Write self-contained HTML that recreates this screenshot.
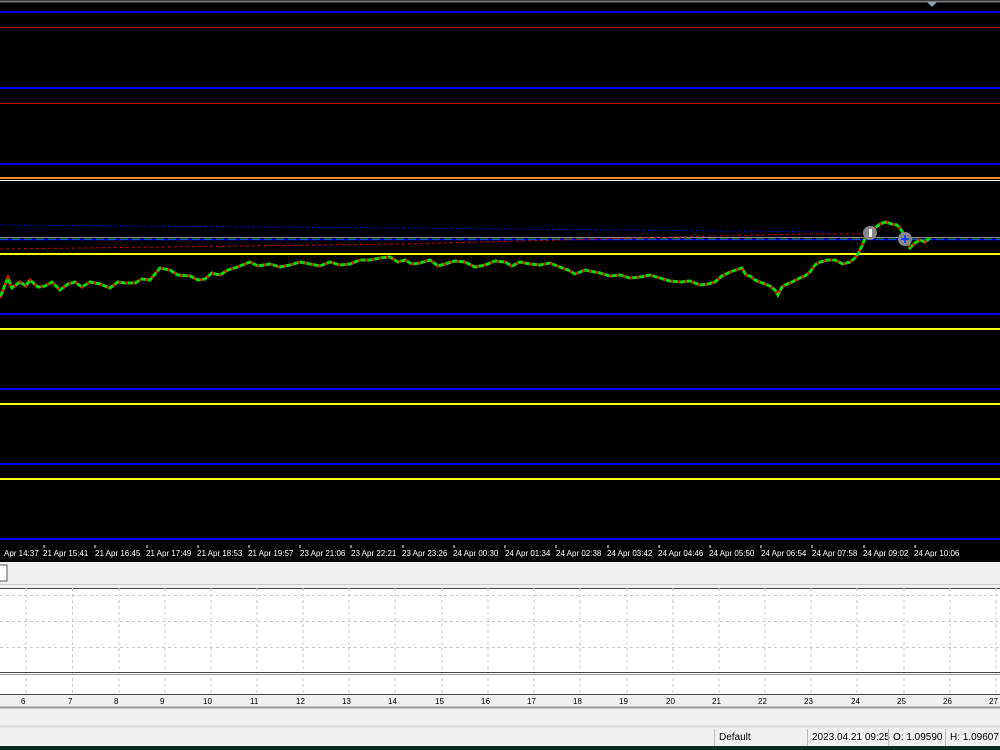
<!DOCTYPE html>
<html><head><meta charset="utf-8"><style>
html,body{margin:0;padding:0;width:1000px;height:750px;overflow:hidden;background:#f0f0f0;font-family:"Liberation Sans",sans-serif}
.t{position:absolute;font-size:8px;color:#fff;top:549px;white-space:nowrap}
.n{position:absolute;font-size:8px;color:#000;top:697px}
.s{position:absolute;top:729px;height:17px;font-size:10px;line-height:17px;color:#000;border-left:1px solid #bbb;padding-left:4px;white-space:nowrap}
</style></head><body>
<svg width="1000" height="750" style="position:absolute;left:0;top:0">
<rect x="0" y="0" width="1000" height="562" fill="#000"/>
<line x1="0" y1="1.5" x2="1000" y2="1.5" stroke="#777" stroke-width="2"/>
<polygon points="927,2 937,2 932,7" fill="#8fa5b5"/>
<g stroke="#0000ee" stroke-width="2">
<line x1="0" y1="12" x2="1000" y2="12"/><line x1="0" y1="88" x2="1000" y2="88"/><line x1="0" y1="164" x2="1000" y2="164"/>
<line x1="0" y1="314" x2="1000" y2="314"/><line x1="0" y1="389" x2="1000" y2="389"/><line x1="0" y1="464" x2="1000" y2="464"/><line x1="0" y1="539" x2="1000" y2="539"/>
</g>
<g stroke="#aa1100" stroke-width="1"><line x1="0" y1="27.5" x2="1000" y2="27.5"/><line x1="0" y1="103.5" x2="1000" y2="103.5"/></g>
<line x1="0" y1="178" x2="1000" y2="178" stroke="#ff8c1a" stroke-width="2"/>
<line x1="0" y1="180.5" x2="1000" y2="180.5" stroke="#fff" stroke-width="1"/>
<g stroke="#ffff00" stroke-width="2"><line x1="0" y1="254" x2="1000" y2="254"/><line x1="0" y1="329" x2="1000" y2="329"/><line x1="0" y1="404" x2="1000" y2="404"/><line x1="0" y1="479" x2="1000" y2="479"/></g>
<polyline points="0,225 400,228 830,232" fill="none" stroke="#0000cc" stroke-dasharray="3,3"/>
<line x1="0" y1="237.5" x2="1000" y2="237.5" stroke="#888" stroke-width="1"/>
<line x1="0" y1="239.5" x2="1000" y2="239.5" stroke="#0000ff" stroke-width="1.5"/>
<line x1="0" y1="239" x2="1000" y2="239" stroke="#2a9a6a" stroke-dasharray="8,4" stroke-width="1"/>
<polyline points="0,249 400,244 800,234 870,234" fill="none" stroke="#cc0000" stroke-dasharray="3,3"/>
<polyline fill="none" stroke="#00dd00" stroke-width="3" points="0,298 5,285 8,278 12,288 20,282 26,286 30,280 38,287 45,286 52,282 60,290 68,284 75,282 82,287 90,282 100,284 110,288 118,282 125,283 135,283 142,279 150,280 160,268 170,270 178,275 190,276 198,280 205,279 212,273 220,275 228,270 235,268 250,262 258,266 270,264 280,267 290,265 300,262 310,264 320,266 330,262 340,265 350,264 360,260 370,260 380,258 390,257 398,262 405,260 412,264 420,263 430,260 438,266 445,264 455,261 465,262 475,267 485,265 495,261 505,262 512,266 520,262 530,264 540,265 550,263 560,267 568,270 575,274 585,270 600,273 610,276 620,275 630,278 640,277 650,275 660,278 670,281 680,282 690,281 700,285 708,284 715,282 722,276 730,272 742,268 746,275 750,276 755,280 760,282 765,284 770,286 775,290 778,295 782,287 785,285 792,282 800,278 805,276 810,272 815,265 820,262 828,260 835,260 843,264 850,262 855,258 858,254 862,246 866,236 870,232 875,228 880,224 886,222 892,224 897,225 900,228 905,236 910,248 915,243 920,240 925,242 930,238"/>
<polyline fill="none" stroke="#ee0000" stroke-width="3" stroke-dasharray="2,5" points="0,298 5,285 8,278 12,288 20,282 26,286 30,280 38,287 45,286 52,282 60,290 68,284 75,282 82,287 90,282 100,284 110,288 118,282 125,283 135,283 142,279 150,280 160,268 170,270 178,275 190,276 198,280 205,279 212,273 220,275 228,270 235,268 250,262 258,266 270,264 280,267 290,265 300,262 310,264 320,266 330,262 340,265 350,264 360,260 370,260 380,258 390,257 398,262 405,260 412,264 420,263 430,260 438,266 445,264 455,261 465,262 475,267 485,265 495,261 505,262 512,266 520,262 530,264 540,265 550,263 560,267 568,270 575,274 585,270 600,273 610,276 620,275 630,278 640,277 650,275 660,278 670,281 680,282 690,281 700,285 708,284 715,282 722,276 730,272 742,268 746,275 750,276 755,280 760,282 765,284 770,286 775,290 778,295 782,287 785,285 792,282 800,278 805,276 810,272 815,265 820,262 828,260 835,260 843,264 850,262 855,258 858,254 862,246 866,236 870,232 875,228 880,224 886,222 892,224 897,225 900,228 905,236 910,248 915,243 920,240 925,242 930,238"/>
<circle cx="870" cy="233" r="7" fill="#888"/><rect x="869" y="229" width="3" height="8" fill="#fff"/>
<circle cx="905" cy="239" r="7" fill="#888"/><path d="M901 239h8M905 235v8" stroke="#1040ff" stroke-width="2"/>
<g stroke="#fff" stroke-width="1">
<line x1="44" y1="545" x2="44" y2="548"/><line x1="95" y1="545" x2="95" y2="548"/><line x1="147" y1="545" x2="147" y2="548"/><line x1="198" y1="545" x2="198" y2="548"/><line x1="249" y1="545" x2="249" y2="548"/><line x1="300" y1="545" x2="300" y2="548"/><line x1="351" y1="545" x2="351" y2="548"/><line x1="403" y1="545" x2="403" y2="548"/><line x1="454" y1="545" x2="454" y2="548"/><line x1="505" y1="545" x2="505" y2="548"/><line x1="556" y1="545" x2="556" y2="548"/><line x1="608" y1="545" x2="608" y2="548"/><line x1="659" y1="545" x2="659" y2="548"/><line x1="710" y1="545" x2="710" y2="548"/><line x1="761" y1="545" x2="761" y2="548"/><line x1="812" y1="545" x2="812" y2="548"/><line x1="864" y1="545" x2="864" y2="548"/><line x1="915" y1="545" x2="915" y2="548"/>
</g>
<path d="M0 565h7v16h-7" fill="#fff" stroke="#555" stroke-width="1"/>
<line x1="0" y1="584.5" x2="1000" y2="584.5" stroke="#ccc"/>
<rect x="0" y="588" width="1000" height="106" fill="#fff"/>
<line x1="0" y1="588.5" x2="1000" y2="588.5" stroke="#444"/>
<g stroke="#ccc" stroke-dasharray="3,3"><line x1="0" y1="595.5" x2="1000" y2="595.5"/><line x1="0" y1="621.5" x2="1000" y2="621.5"/><line x1="0" y1="647.5" x2="1000" y2="647.5"/>
<path d="M26 588V694M72.5 588V694M119 588V694M165 588V694M211 588V694M257 588V694M303 588V694M349 588V694M395 588V694M442 588V694M488 588V694M534 588V694M580 588V694M627 588V694M673 588V694M719 588V694M765 588V694M811 588V694M857 588V694M904 588V694M950 588V694M996 588V694"/></g>
<line x1="0" y1="672.5" x2="1000" y2="672.5" stroke="#444"/><line x1="0" y1="674.5" x2="1000" y2="674.5" stroke="#999"/>
<line x1="0" y1="694.5" x2="1000" y2="694.5" stroke="#444"/>
<line x1="0" y1="707.5" x2="1000" y2="707.5" stroke="#999" stroke-width="2"/>
<line x1="0" y1="726.5" x2="1000" y2="726.5" stroke="#ddd" stroke-width="2"/>
<rect x="0" y="746" width="1000" height="4" fill="#0d2a1e"/>
</svg>
<div class="t" style="left:4px">Apr 14:37</div><div class="t" style="left:43px">21 Apr 15:41</div><div class="t" style="left:95px">21 Apr 16:45</div><div class="t" style="left:146px">21 Apr 17:49</div><div class="t" style="left:197px">21 Apr 18:53</div><div class="t" style="left:248px">21 Apr 19:57</div><div class="t" style="left:300px">23 Apr 21:06</div><div class="t" style="left:351px">23 Apr 22:21</div><div class="t" style="left:402px">23 Apr 23:26</div><div class="t" style="left:453px">24 Apr 00:30</div><div class="t" style="left:505px">24 Apr 01:34</div><div class="t" style="left:556px">24 Apr 02:38</div><div class="t" style="left:607px">24 Apr 03:42</div><div class="t" style="left:658px">24 Apr 04:46</div><div class="t" style="left:709px">24 Apr 05:50</div><div class="t" style="left:761px">24 Apr 06:54</div><div class="t" style="left:812px">24 Apr 07:58</div><div class="t" style="left:863px">24 Apr 09:02</div><div class="t" style="left:914px">24 Apr 10:06</div>
<div class="n" style="left:21px">6</div><div class="n" style="left:68px">7</div><div class="n" style="left:114px">8</div><div class="n" style="left:160px">9</div><div class="n" style="left:203px">10</div><div class="n" style="left:250px">11</div><div class="n" style="left:296px">12</div><div class="n" style="left:342px">13</div><div class="n" style="left:388px">14</div><div class="n" style="left:435px">15</div><div class="n" style="left:481px">16</div><div class="n" style="left:527px">17</div><div class="n" style="left:573px">18</div><div class="n" style="left:619px">19</div><div class="n" style="left:666px">20</div><div class="n" style="left:712px">21</div><div class="n" style="left:758px">22</div><div class="n" style="left:804px">23</div><div class="n" style="left:851px">24</div><div class="n" style="left:897px">25</div><div class="n" style="left:943px">26</div><div class="n" style="left:989px">27</div>
<div class="s" style="left:714px">Default</div><div class="s" style="left:807px">2023.04.21 09:25</div><div class="s" style="left:888px">O: 1.09590</div><div class="s" style="left:945px">H: 1.09607</div>
</body></html>
